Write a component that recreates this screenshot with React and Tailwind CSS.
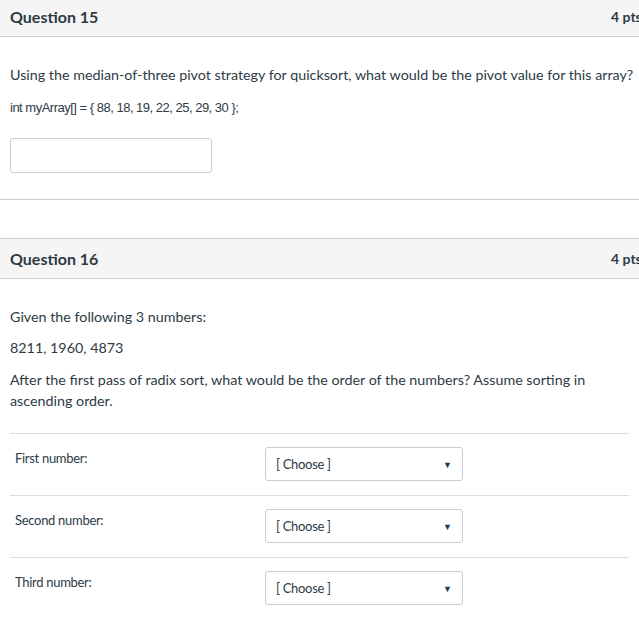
import React from "react";

const lato = { fontFamily: "Lato, 'Noto Sans', sans-serif" };

const Header = ({ title }) => (
    <div className="h-[41px] bg-[#f5f5f5] border-y border-[#c7cdd1] flex items-center justify-between pl-[10px] w-[660px]">
        <span className="text-[16px] font-bold text-[#2d3b45]">{title}</span>
        <span className="text-[14px] font-bold text-[#2d3b45] w-[49px]">4 pts</span>
    </div>
);

const SelectRow = ({ label }) => (
    <div className="border-t border-[#dcdcdc] h-[62px] flex pl-[5px]">
        <div className="w-[250px] pt-[14px] text-[13px] text-[#2d3b45] tracking-[-0.3px]">{label}</div>
        <div className="pt-[13px]">
            <div className="w-[198px] h-[34px] border border-[#c7cdd1] rounded-[3px] flex items-center justify-between px-[10px] text-[13px] text-[#2d3b45]">
                <span className="tracking-[-0.3px]">[ Choose ]</span>
                <span className="text-[9px]">▼</span>
            </div>
        </div>
    </div>
);

export default function App() {
    return (
        <div className="w-[639px] h-[636px] overflow-hidden bg-white" style={lato}>
            <div className="-mt-[4px]">
                <Header title="Question 15" />
            </div>
            <div className="px-[10px] pt-[28px] h-[163px] border-b border-[#c7cdd1]">
                <p className="text-[14.3px] text-[#2d3b45] leading-[20px] whitespace-nowrap">
                    Using the median-of-three pivot strategy for quicksort, what would be the pivot value for this array?
                </p>
                <p className="mt-[13px] text-[13px] text-[#2d3b45] leading-[20px] tracking-[-0.5px]" style={{ fontFamily: "'Liberation Sans', Arial, sans-serif" }}>
                    int myArray[] = {"{"} 88, 18, 19, 22, 25, 29, 30 {"};"}
                </p>
                <div className="mt-[20px] w-[202px] h-[35px] border border-[#c7cdd1] rounded-[3px]" />
            </div>
            <div className="h-[38px]" />
            <Header title="Question 16" />
            <div className="px-[10px] pt-[27px] text-[14.3px] text-[#2d3b45] leading-[21px]">
                <p>Given the following 3 numbers:</p>
                <p className="mt-[10px]">8211, 1960, 4873</p>
                <p className="mt-[11px] pr-[40px]">After the first pass of radix sort, what would be the order of the numbers? Assume sorting in ascending order.</p>
                <div className="mt-[22px]">
                    <SelectRow label="First number:" />
                    <SelectRow label="Second number:" />
                    <SelectRow label="Third number:" />
                </div>
            </div>
        </div>
    );
}
